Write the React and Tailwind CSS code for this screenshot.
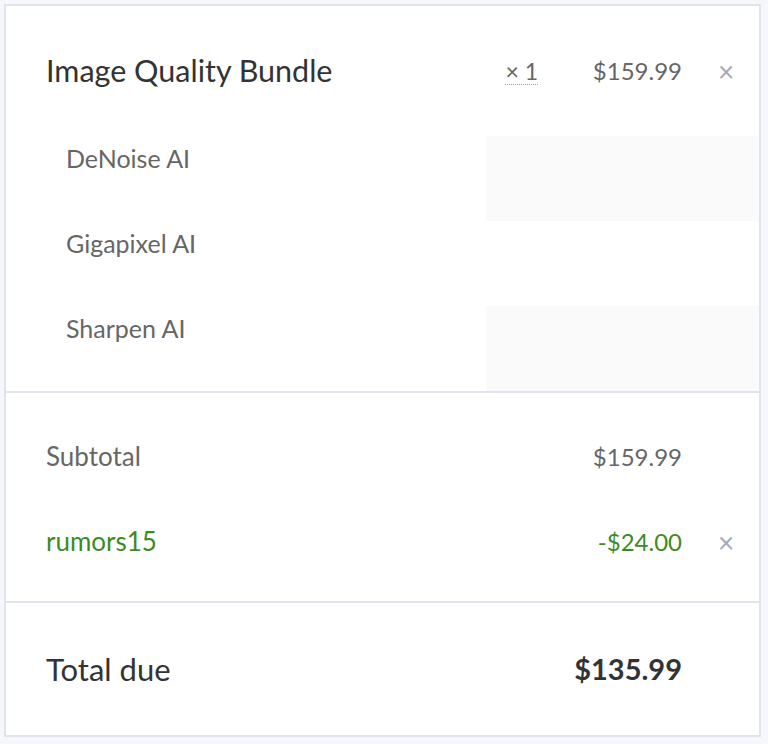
export default function App() {
  const items = ['DeNoise AI', 'Gigapixel AI', 'Sharpen AI'];

  return (
    <div className="w-[768px] h-[744px] bg-[#f6f7fa] pt-1 pl-1" style={{ fontFamily: 'Lato, "Noto Sans", sans-serif' }}>
      <div className="w-[757px] border-2 border-[#e1e4ee] bg-white">
        {/* Bundle header */}
        <div className="h-[130px] flex items-center pl-[40px]">
          <div className="flex-1 text-[30.5px] leading-[36px] pb-[2px] text-[#333]">Image Quality Bundle</div>
          <div className="text-[23px] text-[#666] border-b border-dotted border-[#999] leading-[26px]">×&nbsp;1</div>
          <div className="w-[144px] text-right text-[24px] text-[#666]">$159.99</div>
          <div className="w-[77px] pl-[36px] text-[28px] leading-none text-[#a3a9ba]">×</div>
        </div>

        {/* Bundle contents */}
        {items.map((name, i) => (
          <div key={name} className="h-[85px] flex">
            <div className="w-[480px] pt-[7px] pl-[60px] text-[25px] leading-[30px] text-[#666]">{name}</div>
            <div className={i % 2 === 0 ? 'flex-1 bg-[#fafafa]' : 'flex-1'} />
          </div>
        ))}

        {/* Totals */}
        <div className="border-t-2 border-[#e1e4ee] pt-[21px] pb-[17px]">
          <div className="h-[85px] flex items-center pl-[40px]">
            <div className="flex-1 text-[26px] text-[#666]">Subtotal</div>
            <div className="text-right text-[24px] text-[#666]">$159.99</div>
            <div className="w-[77px]" />
          </div>
          <div className="h-[85px] flex items-center pl-[40px]">
            <div className="flex-1 text-[26px] text-[#3d8b1f]">rumors15</div>
            <div className="text-right text-[24px] text-[#3d8b1f]">-$24.00</div>
            <div className="w-[77px] pl-[36px] text-[28px] leading-none text-[#a3a9ba]">×</div>
          </div>
        </div>

        <div className="border-t-2 border-[#e1e4ee] h-[134px] flex items-center pl-[40px]">
          <div className="flex-1 text-[31px] text-[#333]">Total due</div>
          <div className="text-right text-[29px] font-bold text-[#333]">$135.99</div>
          <div className="w-[77px]" />
        </div>
      </div>
    </div>
  );
}
